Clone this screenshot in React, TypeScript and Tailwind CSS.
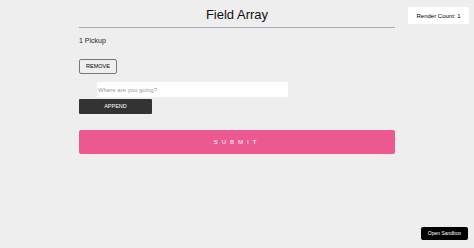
import React from 'react';

export default function App() {
  return (
    <div
      className="relative min-h-[248px] w-full bg-[#eeeeee] text-black"
      style={{ fontFamily: '"Liberation Sans", Arial, sans-serif' }}
    >
      <form className="mx-auto flex w-[316px] flex-col items-start" onSubmit={(e) => e.preventDefault()}>
        <h1 className="w-full border-b border-[#a8a8b4] pt-[7px] pb-[5px] text-center text-[13px] leading-[15px] font-normal text-[#111]">
          Field Array
        </h1>

        <p className="mt-[8px] text-[7px] leading-[9px] text-[#222]">1 Pickup</p>

        <button
          type="button"
          className="mt-[14px] flex h-[15px] w-[38px] items-center justify-center rounded-[2px] border border-[#777] text-[5.5px] leading-none"
        >
          REMOVE
        </button>

        <input
          className="mt-[8px] ml-[18px] h-[15px] w-[191px] bg-white px-[1px] text-[6px] outline-none placeholder:text-[#999]"
          placeholder="Where are you going?"
        />

        <button
          type="button"
          className="mt-[2px] flex h-[15px] w-[73px] items-center justify-center rounded-[1px] bg-[#333333] text-[5.5px] leading-none text-white"
        >
          APPEND
        </button>

        <button
          type="submit"
          className="mt-[16px] flex h-[24px] w-full items-center justify-center rounded-[2px] bg-[#ec5990] text-[6px] leading-none tracking-[4px] text-white"
        >
          SUBMIT
        </button>
      </form>

      {/* Render counter badge */}
      <div className="absolute top-[7px] right-[5px] flex h-[17px] w-[61px] items-center justify-center bg-white text-[6px] leading-none">
        Render Count: 1
      </div>

      {/* Sandbox link */}
      <div className="absolute top-[227px] right-[6px] flex h-[13px] w-[47px] items-center justify-center rounded-[2px] bg-black text-[5px] leading-none text-white">
        Open Sandbox
      </div>
    </div>
  );
}
